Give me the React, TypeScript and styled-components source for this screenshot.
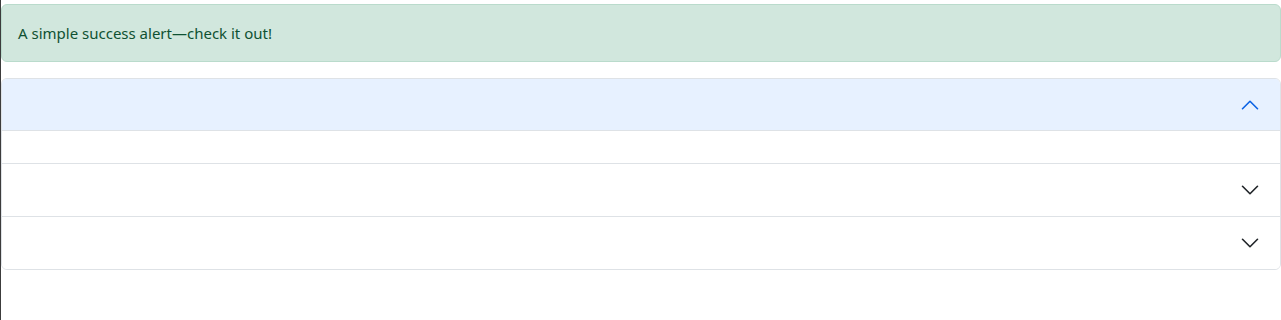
import { useState } from "react";
import styled, { createGlobalStyle, css } from "styled-components";

const GlobalStyle = createGlobalStyle`
  * { box-sizing: border-box; }
  body {
    margin: 0;
    background: #fff;
    color: #212529;
    font-family: "Noto Sans", "Liberation Sans", sans-serif;
    font-size: 16px;
    line-height: 24px;
    border-left: 1px solid #3c3c3c;
    min-height: 320px;
  }
`;

const Page = styled.div`
  padding: 4px 0 0 0;
`;

const Alert = styled.div`
  padding: 16px 16px;
  margin-bottom: 16px;
  background: #d1e7dd;
  border: 1px solid #badbcc;
  border-radius: 6px;
  color: #0f5132;
  font-size: 15px;
`;

const Accordion = styled.div`
  border: 1px solid #dee2e6;
  border-radius: 6px;
  overflow: hidden;
`;

const Item = styled.div`
  & + & {
    border-top: 1px solid #dee2e6;
  }
`;

const Header = styled.button<{ $open: boolean }>`
  display: flex;
  align-items: center;
  width: 100%;
  height: 52px;
  padding: 0 20px;
  border: 0;
  background: #fff;
  color: #212529;
  font: inherit;
  cursor: pointer;
  ${(p) =>
    p.$open &&
    css`
      background: #e7f1ff;
      color: #0c63e4;
      box-shadow: inset 0 -1px 0 #dee2e6;
    `}
`;

const Chevron = styled.svg<{ $open: boolean }>`
  margin-left: auto;
  width: 20px;
  height: 20px;
  transform: ${(p) => (p.$open ? "rotate(-180deg)" : "none")};
`;

const Body = styled.div`
  padding: 16px 20px;
`;

const items = ["", "", ""];

export default function App() {
  const [open, setOpen] = useState(0);
  return (
    <>
      <GlobalStyle />
      <Page>
        <Alert>A simple success alert—check it out!</Alert>
        <Accordion>
          {items.map((title, i) => (
            <Item key={i}>
              <Header $open={open === i} onClick={() => setOpen(open === i ? -1 : i)}>
                {title}
                <Chevron $open={open === i} viewBox="0 0 16 16" fill="none">
                  <path
                    d="M2 5l6 6 6-6"
                    stroke={open === i ? "#0c63e4" : "#212529"}
                    strokeWidth="1.3"
                    strokeLinecap="round"
                    strokeLinejoin="round"
                  />
                </Chevron>
              </Header>
              {open === i && <Body />}
            </Item>
          ))}
        </Accordion>
      </Page>
    </>
  );
}
